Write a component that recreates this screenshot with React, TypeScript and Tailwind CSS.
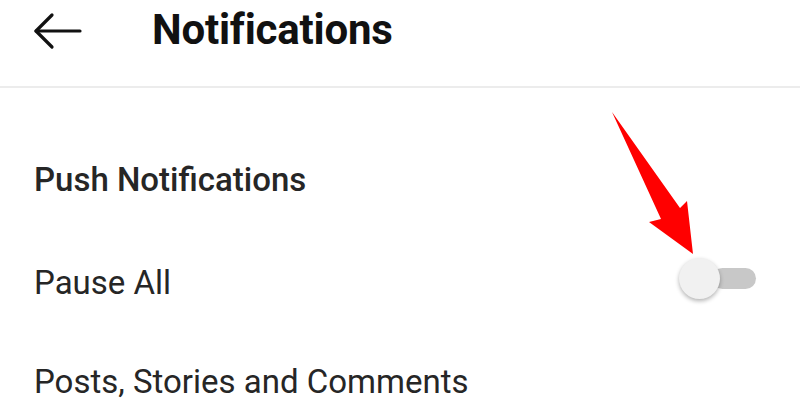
import React from 'react'

function BackArrow() {
  return (
    <svg width="50" height="40" viewBox="0 0 50 40" fill="none" stroke="#111" strokeWidth="3.2" strokeLinecap="round" strokeLinejoin="round">
      <path d="M3 19 H47" />
      <path d="M19 3 L3 19 L19 35" />
    </svg>
  )
}

function Toggle() {
  return (
    <div className="relative h-[42px] w-[77px]">
      <div className="absolute left-[33px] top-[10px] h-[21px] w-[44px] rounded-full bg-[#c8c8c8]" />
      <div className="absolute left-0 top-0 h-[41px] w-[41px] rounded-full bg-[#f1f1f1] shadow-[0_2px_4px_rgba(0,0,0,0.3)]" />
    </div>
  )
}

export default function App() {
  return (
    <div
      className="relative h-[413px] w-[800px] overflow-hidden bg-white text-[#111]"
      style={{ fontFamily: 'Roboto, "Liberation Sans", sans-serif' }}
    >
      {/* Header */}
      <div className="flex h-[88px] items-start border-b-2 border-[#ececec]">
        <div className="ml-[33px] mt-[12px]">
          <BackArrow />
        </div>
        <h1 className="ml-[69px] mt-[5px] text-[42px] font-bold leading-[50px] tracking-[-0.2px]">Notifications</h1>
      </div>

      {/* Settings */}
      <div className="px-[34px] text-[33px] leading-[40px] text-[#262626]">
        <div className="pt-[72px] font-medium">Push Notifications</div>
        <div className="mt-[63px] flex items-start justify-between">
          <span>Pause All</span>
          <div className="mr-[10px] mt-[-5px]">
            <Toggle />
          </div>
        </div>
        <div className="mt-[59px]">Posts, Stories and Comments</div>
      </div>

      {/* Red annotation arrow */}
      <svg className="absolute left-0 top-0" width="800" height="413" viewBox="0 0 800 413">
        <polygon points="612,112 680,208 687,201 693,254 649,222 661,219" fill="#ff0000" />
      </svg>
    </div>
  )
}
